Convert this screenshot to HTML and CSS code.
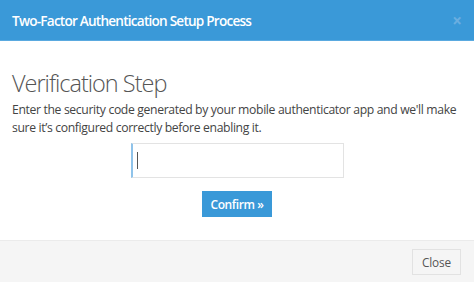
FILE: index.html
```html
<!DOCTYPE html>
<html lang="en">
<head>
<meta charset="UTF-8">
<title>Two-Factor Authentication</title>
<link rel="stylesheet" href="styles.css">
</head>
<body>
  <div class="modal">
    <div class="modal-header">
      <div class="modal-title">Two-Factor Authentication Setup Process</div>
      <span class="close-x">&times;</span>
    </div>
    <div class="modal-body">
      <h1 class="step-title">Verification Step</h1>
      <p class="step-text">Enter the security code generated by your mobile authenticator app and we'll make sure it’s configured correctly before enabling it.</p>
      <div class="code-row">
        <div class="code-input"><span class="caret"></span></div>
      </div>
      <div class="confirm-row">
        <button class="button">Confirm &raquo;</button>
      </div>
    </div>
    <div class="modal-footer">
      <button class="button-default">Close</button>
    </div>
  </div>
</body>
</html>
```

FILE: styles.css
```css
body {
  margin: 0;
  background: #fff;
  font-family: "Open Sans", "Noto Sans", sans-serif;
}

.modal {
  width: 474px;
  height: 283px;
  display: flex;
  flex-direction: column;
  overflow: hidden;
}

.modal-header {
  height: 40px;
  background: #3a99d8;
  border-bottom: 1px solid #5aaae0;
  display: flex;
  align-items: center;
  justify-content: space-between;
  padding: 0 12px;
}

.modal-title {
  color: #fff;
  font-size: 13.6px;
  font-weight: 600;
  letter-spacing: -0.78px;
}

.close-x {
  color: #6aaee0;
  font-size: 17px;
  font-weight: 700;
  line-height: 1;
}

.modal-body {
  flex: 1;
  padding: 0 12px;
}

.step-title {
  margin: 26px 0 0;
  font-size: 23.5px;
  font-weight: 300;
  color: #555;
  line-height: 32px;
  letter-spacing: -1px;
}

.step-text {
  margin: 2px -8px 0 0;
  font-size: 12.2px;
  line-height: 18px;
  color: #444;
  letter-spacing: -0.35px;
}

.code-row {
  display: flex;
  justify-content: center;
  margin-top: 6px;
}

.code-input {
  box-sizing: border-box;
  width: 213px;
  height: 35px;
  border: 1px solid #e3e3e3;
  border-left: 2px solid #8fc3ea;
  display: flex;
  align-items: center;
  padding-left: 4px;
}

.caret {
  width: 1px;
  height: 17px;
  background: #555;
}

.confirm-row {
  display: flex;
  justify-content: center;
  margin-top: 13px;
}

.button {
  width: 70px;
  height: 26px;
  background: #3a99d8;
  color: #fff;
  border: none;
  font-family: inherit;
  font-size: 12px;
  font-weight: 600;
  letter-spacing: -0.4px;
  padding: 0;
}

.modal-footer {
  height: 41px;
  background: #f5f5f5;
  border-top: 1px solid #ebebeb;
  display: flex;
  align-items: center;
  justify-content: flex-end;
  padding-right: 13px;
  margin-bottom: 1px;
}

.button-default {
  width: 49px;
  height: 26px;
  background: #f5f5f5;
  border: 1px solid #e2e2e2;
  color: #555;
  font-family: inherit;
  font-size: 11.8px;
  letter-spacing: -0.2px;
  padding: 0;
}
```
